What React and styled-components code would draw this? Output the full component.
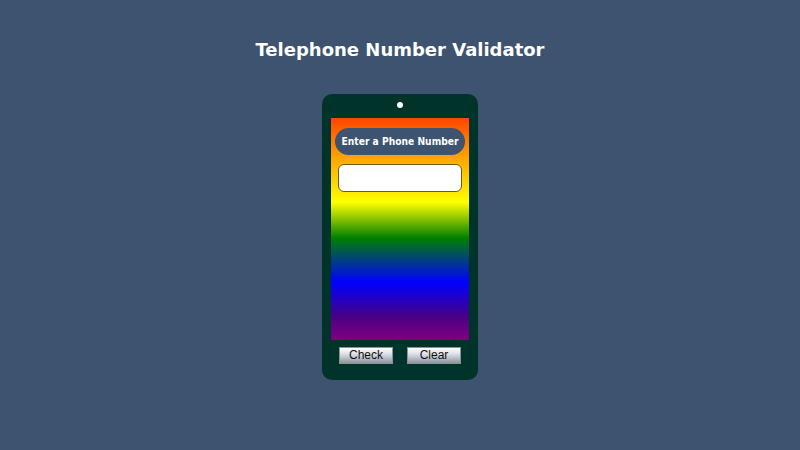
import React, { useState } from "react";
import styled, { createGlobalStyle } from "styled-components";

const GlobalStyle = createGlobalStyle`
  html, body {
    margin: 0;
    padding: 0;
    background: #3d5370;
  }
  body {
    font-family: "DejaVu Sans", Verdana, sans-serif;
  }
`;

const Page = styled.div`
  width: 800px;
  height: 450px;
  display: flex;
  flex-direction: column;
  align-items: center;
  box-sizing: border-box;
  padding-top: 38px;
`;

const Title = styled.h1`
  margin: 0;
  color: white;
  font-size: 18px;
  font-weight: bold;
  line-height: 24px;
`;

const Phone = styled.div`
  margin-top: 32px;
  width: 156px;
  height: 286px;
  background: #00332a;
  border-radius: 10px;
  box-sizing: border-box;
  padding: 8px 9px 0;
  display: flex;
  flex-direction: column;
  align-items: center;
`;

const Camera = styled.div`
  width: 6px;
  height: 6px;
  border-radius: 50%;
  background: white;
`;

const Screen = styled.div`
  margin-top: 10px;
  width: 138px;
  height: 222px;
  background: linear-gradient(orangered, orange 18%, yellow 38%, green 54%, blue 74%, indigo 90%, purple);
  box-sizing: border-box;
  padding: 10px 4px 0;
  display: flex;
  flex-direction: column;
  align-items: center;
`;

const Label = styled.label`
  width: 130px;
  height: 27px;
  border-radius: 14px;
  background: #3d5370;
  color: white;
  font-family: "DejaVu Sans Condensed", "DejaVu Sans", sans-serif;
  font-size: 10.2px;
  font-weight: bold;
  white-space: nowrap;
  display: flex;
  align-items: center;
  justify-content: center;
`;

const Input = styled.input`
  margin-top: 9px;
  width: 124px;
  height: 28px;
  box-sizing: border-box;
  border: 1px solid #6b5a1a;
  border-radius: 6px;
  background: white;
  outline: none;
`;

const Buttons = styled.div`
  width: 100%;
  display: flex;
  justify-content: space-between;
  padding: 7px 8px 0;
  box-sizing: border-box;
`;

const Button = styled.button`
  width: 54px;
  height: 17px;
  padding: 0;
  border: 1px solid #8a919b;
  background: linear-gradient(#ffffff, #dde0e5 40%, #8f96a1);
  font-family: "Liberation Sans", Arial, sans-serif;
  font-size: 12px;
  color: #111;
  line-height: 15px;
`;

export default function App() {
  const [value, setValue] = useState("");
  return (
    <>
      <GlobalStyle />
      <Page>
        <Title>Telephone Number Validator</Title>
        <Phone>
          <Camera />
          <Screen>
            <Label htmlFor="user-input">Enter a Phone Number</Label>
            <Input id="user-input" value={value} onChange={(e) => setValue(e.target.value)} />
          </Screen>
          <Buttons>
            <Button>Check</Button>
            <Button onClick={() => setValue("")}>Clear</Button>
          </Buttons>
        </Phone>
      </Page>
    </>
  );
}
